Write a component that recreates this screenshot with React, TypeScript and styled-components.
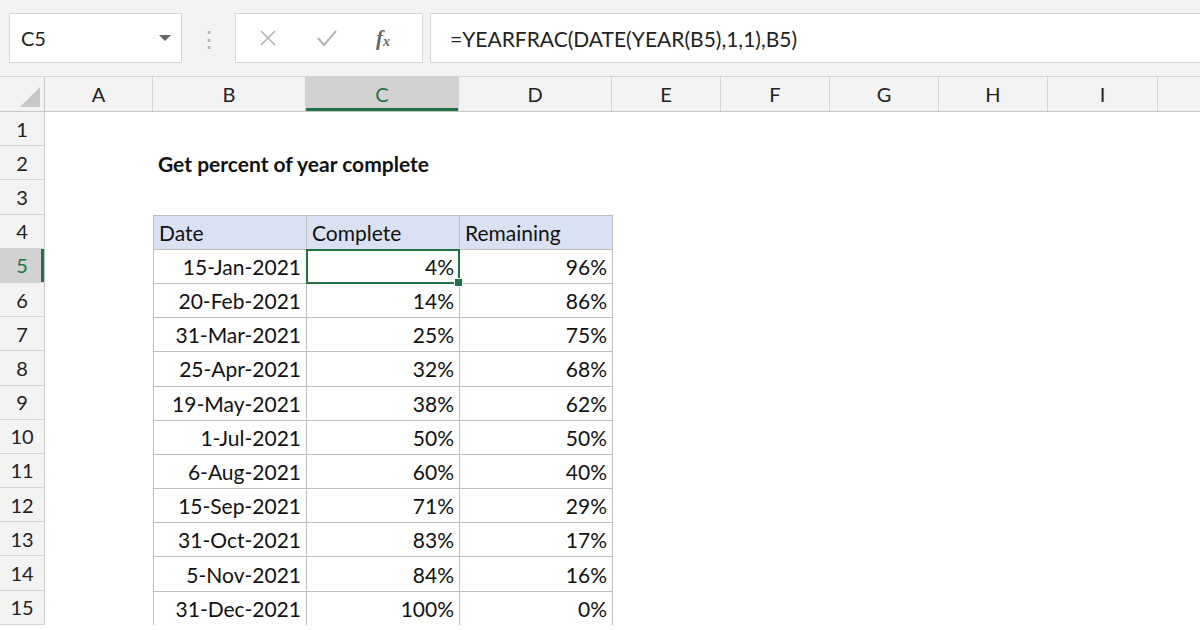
import styled, { createGlobalStyle } from 'styled-components';

const GlobalStyle = createGlobalStyle`
    body { margin: 0; background: #fff; font-family: Lato, "Open Sans", sans-serif; }
`;

const cols = [
    { key: 'A', w: 108 },
    { key: 'B', w: 153 },
    { key: 'C', w: 153 },
    { key: 'D', w: 153 },
    { key: 'E', w: 109 },
    { key: 'F', w: 109 },
    { key: 'G', w: 109 },
    { key: 'H', w: 109 },
    { key: 'I', w: 110 },
    { key: '', w: 60 },
];

const data = [
    ['15-Jan-2021', '4%', '96%'],
    ['20-Feb-2021', '14%', '86%'],
    ['31-Mar-2021', '25%', '75%'],
    ['25-Apr-2021', '32%', '68%'],
    ['19-May-2021', '38%', '62%'],
    ['1-Jul-2021', '50%', '50%'],
    ['6-Aug-2021', '60%', '40%'],
    ['15-Sep-2021', '71%', '29%'],
    ['31-Oct-2021', '83%', '17%'],
    ['5-Nov-2021', '84%', '16%'],
    ['31-Dec-2021', '100%', '0%'],
];

const template = `45px ${cols.map((c) => c.w + 'px').join(' ')}`;

const App = () => {
    const rows: { n: number; cells: (string | null)[]; kind: string }[] = [];
    rows.push({ n: 1, cells: [], kind: 'empty' });
    rows.push({ n: 2, cells: [], kind: 'title' });
    rows.push({ n: 3, cells: [], kind: 'empty' });
    rows.push({ n: 4, cells: ['Date', 'Complete', 'Remaining'], kind: 'head' });
    data.forEach((d, i) => rows.push({ n: 5 + i, cells: d, kind: 'data' }));

    return (
        <>
            <GlobalStyle />
            <Toolbar>
                <NameBox>
                    C5
                    <Caret />
                </NameBox>
                <Dots>⋮</Dots>
                <FxBox>
                    <svg width="20" height="20" viewBox="0 0 20 20">
                        <path d="M3 3 L17 17 M17 3 L3 17" stroke="#b4b4b4" strokeWidth="1.6" />
                    </svg>
                    <svg width="22" height="20" viewBox="0 0 22 20">
                        <path d="M2 10 L8 17 L20 3" stroke="#b4b4b4" strokeWidth="2" fill="none" />
                    </svg>
                    <FxLabel>
                        f<sub>x</sub>
                    </FxLabel>
                </FxBox>
                <FormulaBox>=YEARFRAC(DATE(YEAR(B5),1,1),B5)</FormulaBox>
            </Toolbar>
            <Grid>
                <HeadRow style={{ gridTemplateColumns: template }}>
                    <Corner>
                        <svg width="22" height="22" viewBox="0 0 22 22">
                            <path d="M21 1 L21 21 L1 21 Z" fill="#c8c8c8" />
                        </svg>
                    </Corner>
                    {cols.map((c) => (
                        <ColHead key={c.key} $active={c.key === 'C'}>
                            {c.key}
                        </ColHead>
                    ))}
                </HeadRow>
                {rows.map((r) => (
                    <Row key={r.n} style={{ gridTemplateColumns: template }}>
                        <RowHead $active={r.n === 5}>{r.n}</RowHead>
                        <Cell />
                        {r.kind === 'title' ? (
                            <Title>Get percent of year complete</Title>
                        ) : r.kind === 'head' ? (
                            r.cells.map((c) => (
                                <TableHead key={c}>{c}</TableHead>
                            ))
                        ) : r.kind === 'data' ? (
                            r.cells.map((c, i) => (
                                <TableCell key={i} $selected={r.n === 5 && i === 1}>
                                    {c}
                                    {r.n === 5 && i === 1 && <Handle />}
                                </TableCell>
                            ))
                        ) : (
                            <>
                                <Cell />
                                <Cell />
                                <Cell />
                            </>
                        )}
                        {cols.slice(4).map((c) => (
                            <Cell key={c.key} />
                        ))}
                    </Row>
                ))}
            </Grid>
        </>
    );
};

export default App;

const Toolbar = styled.div`
    height: 77px;
    background: #f3f3f3;
    display: flex;
    align-items: center;
    padding: 0 0 0 9px;
    border-bottom: 1px solid #d4d4d4;
    box-sizing: border-box;
`;

const NameBox = styled.div`
    width: 173px;
    height: 50px;
    box-sizing: border-box;
    background: #fff;
    border: 1px solid #d6d6d6;
    display: flex;
    align-items: center;
    justify-content: space-between;
    padding: 0 10px 0 11px;
    font-size: 20px;
    color: #222;
`;

const Caret = styled.span`
    width: 0;
    height: 0;
    border-left: 6px solid transparent;
    border-right: 6px solid transparent;
    border-top: 6px solid #666;
`;

const Dots = styled.span`
    width: 53px;
    text-align: center;
    color: #b0b0b0;
    font-size: 22px;
`;

const FxBox = styled.div`
    width: 188px;
    height: 50px;
    box-sizing: border-box;
    background: #fff;
    border: 1px solid #d6d6d6;
    display: flex;
    align-items: center;
    gap: 38px;
    padding-left: 22px;
`;

const FxLabel = styled.span`
    font-family: "Liberation Serif", serif;
    font-style: italic;
    font-weight: bold;
    color: #666;
    font-size: 21px;
    sub {
        font-size: 14px;
        vertical-align: -1px;
    }
`;

const FormulaBox = styled.div`
    flex: 1;
    margin-left: 7px;
    height: 50px;
    box-sizing: border-box;
    background: #fff;
    border: 1px solid #d6d6d6;
    border-right: none;
    display: flex;
    align-items: center;
    padding-left: 19px;
    font-size: 21px;
    color: #222;
`;

const Grid = styled.div`
    display: flex;
    flex-direction: column;
`;

const HeadRow = styled.div`
    display: grid;
    height: 34px;
    background: #f3f3f3;
    border-bottom: 1px solid #c6c6c6;
`;

const Row = styled.div`
    display: grid;
    height: 34.2px;
`;

const Corner = styled.div`
    display: flex;
    align-items: flex-end;
    justify-content: flex-end;
    padding: 0 3px 3px 0;
    border-right: 1px solid #c6c6c6;
`;

const ColHead = styled.div<{ $active?: boolean }>`
    display: flex;
    align-items: center;
    justify-content: center;
    font-size: 20px;
    color: ${(p) => (p.$active ? '#217346' : '#222')};
    background: ${(p) => (p.$active ? '#d2d2d2' : 'transparent')};
    border-right: 1px solid #d4d4d4;
    box-shadow: ${(p) => (p.$active ? 'inset 0 -3px 0 #217346' : 'none')};
`;

const RowHead = styled.div<{ $active?: boolean }>`
    display: flex;
    align-items: center;
    justify-content: center;
    font-size: 20px;
    color: ${(p) => (p.$active ? '#217346' : '#222')};
    background: ${(p) => (p.$active ? '#d2d2d2' : '#f3f3f3')};
    border-bottom: 1px solid #d4d4d4;
    border-right: 1px solid #c6c6c6;
    box-shadow: ${(p) => (p.$active ? 'inset -3px 0 0 #217346' : 'none')};
`;

const Cell = styled.div``;

const Title = styled.div`
    grid-column: span 3;
    display: flex;
    align-items: center;
    padding-left: 5px;
    font-weight: bold;
    font-size: 21px;
    color: #111;
`;

const TableHead = styled.div`
    background: #d9e1f2;
    border: 1px solid #bfbfbf;
    margin: 0 -1px -1px 0;
    display: flex;
    align-items: center;
    padding-left: 5px;
    font-size: 21px;
    color: #111;
`;

const TableCell = styled.div<{ $selected?: boolean }>`
    position: relative;
    border: 1px solid #bfbfbf;
    margin: 0 -1px -1px 0;
    display: flex;
    align-items: center;
    justify-content: flex-end;
    padding-right: 5px;
    font-size: 21px;
    color: #111;
    ${(p) => p.$selected && 'outline: 2px solid #217346; outline-offset: -2px; z-index: 1;'}
`;

const Handle = styled.span`
    position: absolute;
    right: -4px;
    bottom: -4px;
    width: 7px;
    height: 7px;
    background: #217346;
    border: 1px solid #fff;
`;
